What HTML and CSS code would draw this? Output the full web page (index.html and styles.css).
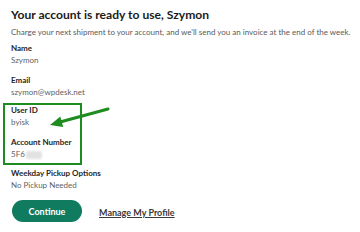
FILE: index.html
```html
<!DOCTYPE html>
<html lang="en">
<head>
<meta charset="utf-8">
<title>Account ready</title>
<link rel="stylesheet" href="styles.css">
</head>
<body>
<main class="page">
  <h1 class="title">Your account is ready to use, Szymon</h1>
  <p class="sub">Charge your next shipment to your account, and we'll send you an invoice at the end of the week.</p>

  <div class="field first">
    <span class="label">Name</span>
    <span class="value">Szymon</span>
  </div>
  <div class="field">
    <span class="label">Email</span>
    <span class="value">szymon@wpdesk.net</span>
  </div>

  <section class="highlight">
    <div class="field inbox">
      <span class="label">User ID</span>
      <span class="value">byisk</span>
    </div>
    <div class="field">
      <span class="label">Account Number</span>
      <span class="value">5F6<span class="redact"></span></span>
    </div>
  </section>

  <div class="field after">
    <span class="label">Weekday Pickup Options</span>
    <span class="value">No Pickup Needed</span>
  </div>

  <div class="actions">
    <button class="btn">Continue</button>
    <a class="link" href="#">Manage My Profile</a>
  </div>
</main>

<svg class="arrow" width="360" height="232" viewBox="0 0 360 232" aria-hidden="true">
  <line x1="108" y1="109" x2="61" y2="121.8" stroke="#1f8c1f" stroke-width="3" stroke-linecap="round"/>
  <polygon points="50,125 60.3,116.6 63.2,127" fill="#1f8c1f"/>
</svg>
</body>
</html>
```

FILE: styles.css
```css
html, body {
  margin: 0;
  padding: 0;
  background: #ffffff;
}

body {
  width: 360px;
  height: 232px;
  overflow: hidden;
  position: relative;
  font-family: Lato, "Open Sans", "Liberation Sans", sans-serif;
}

.page {
  display: flex;
  flex-direction: column;
  align-items: flex-start;
  padding: 7px 0 0 11px;
}

.title {
  margin: 0;
  font-size: 12.1px;
  line-height: 15px;
  font-weight: 700;
  color: #1b1b1b;
}

.sub {
  margin: 4px 0 0;
  font-size: 8px;
  line-height: 12px;
  color: #5a5a5a;
  white-space: nowrap;
}

.field {
  display: flex;
  flex-direction: column;
  gap: 1px;
  margin-top: 9px;
}

.field.first {
  margin-top: 5px;
}

.label {
  font-size: 8px;
  line-height: 11px;
  font-weight: 700;
  color: #262626;
}

.value {
  font-size: 8px;
  line-height: 11px;
  color: #5f5f5f;
  display: flex;
  align-items: center;
}

.highlight {
  margin: 5px 0 0 -8px;
  width: 69px;
  padding: 0 0 3px 6px;
  border: 2px solid #1f8c1f;
}

.field.inbox {
  margin-top: 0;
}

.redact {
  display: inline-block;
  width: 16px;
  height: 8px;
  margin-left: 1px;
  background: #e2e2e2;
  border-radius: 2px;
  filter: blur(1.2px);
}

.field.after {
  margin-top: 3px;
}

.actions {
  display: flex;
  align-items: center;
  gap: 17px;
  margin-top: 9px;
  padding-left: 1px;
}

.btn {
  width: 70px;
  height: 22px;
  border: none;
  border-radius: 11px;
  background: #117b60;
  color: #ffffff;
  font-family: Lato, "Open Sans", "Liberation Sans", sans-serif;
  font-size: 9px;
  font-weight: 700;
  padding: 0;
}

.link {
  font-size: 9px;
  font-weight: 700;
  color: #3a3a3a;
  text-decoration: underline;
  margin-top: 2px;
}

.arrow {
  position: absolute;
  left: 0;
  top: 0;
  pointer-events: none;
}
```
